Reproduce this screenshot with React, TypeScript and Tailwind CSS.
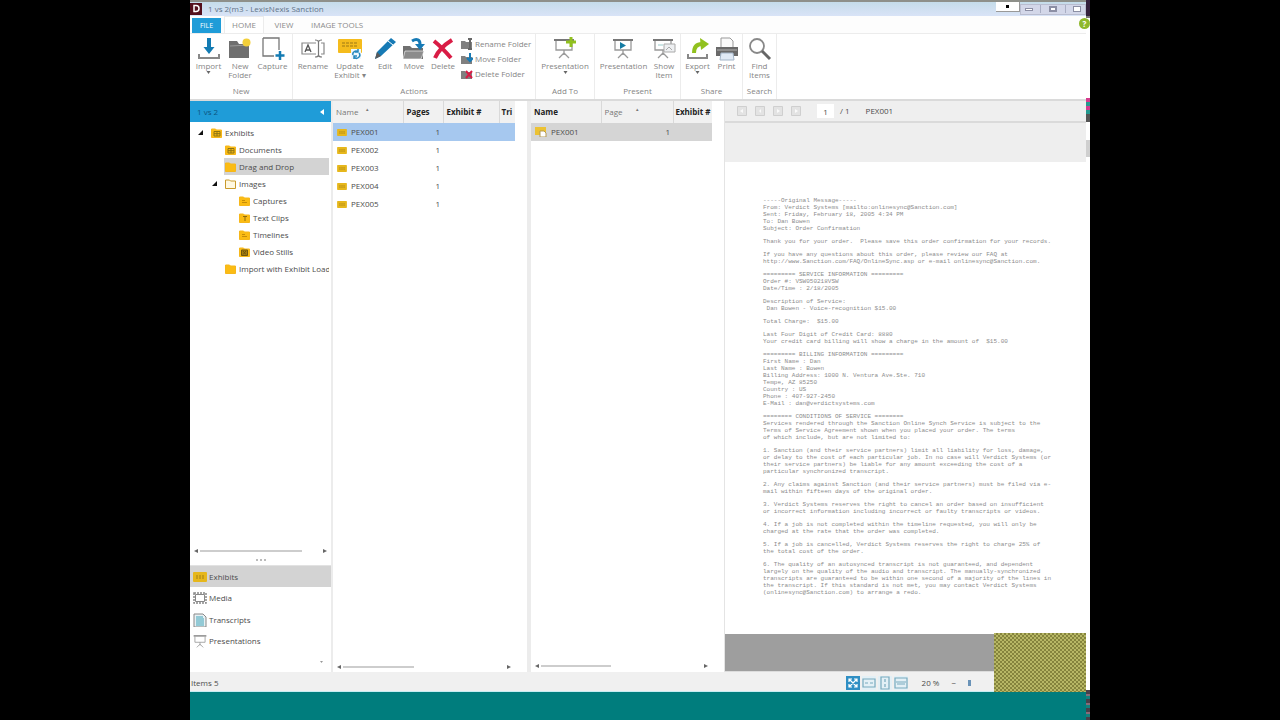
import type { ReactNode } from "react";
import clsx from "clsx";

type FolderKind = "grid" | "plain" | "outline" | "line" | "text" | "film";

type TreeItem = {
    name: string;
    level: number;
    kind: FolderKind;
    open?: boolean;
    selected?: boolean;
};

const tree: TreeItem[] = [
    { name: "Exhibits", level: 0, kind: "grid", open: true },
    { name: "Documents", level: 1, kind: "grid" },
    { name: "Drag and Drop", level: 1, kind: "plain", selected: true },
    { name: "Images", level: 1, kind: "outline", open: true },
    { name: "Captures", level: 2, kind: "line" },
    { name: "Text Clips", level: 2, kind: "text" },
    { name: "Timelines", level: 2, kind: "line" },
    { name: "Video Stills", level: 2, kind: "film" },
    { name: "Import with Exhibit Load", level: 1, kind: "plain" },
];

const exhibits = ["PEX001", "PEX002", "PEX003", "PEX004", "PEX005"];

const letter: string[] = [
    `-----Original Message-----
From: Verdict Systems [mailto:onlinesync@Sanction.com]
Sent: Friday, February 18, 2005 4:34 PM
To: Dan Bowen
Subject: Order Confirmation`,
    `Thank you for your order.  Please save this order confirmation for your records.`,
    `If you have any questions about this order, please review our FAQ at
http://www.Sanction.com/FAQ/OnlineSync.asp or e-mail onlinesync@Sanction.com.`,
    `========= SERVICE INFORMATION =========
Order #: VSW050218VSW
Date/Time : 2/18/2005`,
    `Description of Service:
 Dan Bowen - Voice-recognition $15.00`,
    `Total Charge:  $15.00`,
    `Last Four Digit of Credit Card: 8880
Your credit card billing will show a charge in the amount of  $15.00`,
    `========= BILLING INFORMATION =========
First Name : Dan
Last Name : Bowen
Billing Address: 1000 N. Ventura Ave.Ste. 710
Tempe, AZ 85250
Country : US
Phone : 407-927-2450
E-Mail : dan@verdictsystems.com`,
    `======== CONDITIONS OF SERVICE ========
Services rendered through the Sanction Online Synch Service is subject to the
Terms of Service Agreement shown when you placed your order. The terms
of which include, but are not limited to:`,
    `1. Sanction (and their service partners) limit all liability for loss, damage,
or delay to the cost of each particular job. In no case will Verdict Systems (or
their service partners) be liable for any amount exceeding the cost of a
particular synchronized transcript.`,
    `2. Any claims against Sanction (and their service partners) must be filed via e-
mail within fifteen days of the original order.`,
    `3. Verdict Systems reserves the right to cancel an order based on insufficient
or incorrect information including incorrect or faulty transcripts or videos.`,
    `4. If a job is not completed within the timeline requested, you will only be
charged at the rate that the order was completed.`,
    `5. If a job is cancelled, Verdict Systems reserves the right to charge 25% of
the total cost of the order.`,
    `6. The quality of an autosynced transcript is not guaranteed, and dependent
largely on the quality of the audio and transcript. The manually-synchronized
transcripts are guaranteed to be within one second of a majority of the lines in
the transcript. If this standard is not met, you may contact Verdict Systems
(onlinesync@Sanction.com) to arrange a redo.`,
];

function Folder({ kind }: { kind: FolderKind }) {
    return (
        <svg className="h-[10px] w-[11px] shrink-0" viewBox="0 0 11 10">
            <path
                d="M0.5 1h4l1 1h5v7.500h-10z"
                fill={kind === "outline" ? "#fff8e0" : "#fbbc14"}
                stroke={kind === "outline" ? "#c99a2b" : "#f6b71a"}
            />
            {kind === "grid" && <path d="M3 3.500h6v4.500h-6zM3 5.700h6M6 3.500v4.500" fill="none" stroke="#8d7414" />}
            {kind === "line" && <path d="M3 6.500h5M3 4.500h3" stroke="#c58c0a" />}
            {kind === "text" && <path d="M4 3.500h4M6 3.500v4.500" stroke="#8d6a10" />}
            {kind === "film" && <path d="M2.500 3h6v5.500h-6zM4 4l3 3.500M7 4l-3 3.500" fill="#a57d0f" stroke="#6d5510" />}
        </svg>
    );
}

function ExhibitIcon({ className }: { className: string }) {
    return (
        <svg className={className} viewBox="0 0 14 10">
            <rect width="14" height="10" rx="1" fill="#e6b71c" />
            <path d="M3 4h8M3 6h8" stroke="#a37e12" strokeDasharray="2 1" />
        </svg>
    );
}

const caret = (
    <svg className="h-[5px] w-[5px]" viewBox="0 0 5 5">
        <path d="M0.500 1h4L2.500 4z" fill="#666" />
    </svg>
);

type ToolButtonProps = {
    label: string;
    icon: ReactNode;
    width: string;
    menu?: boolean;
};

function ToolButton({ label, icon, width, menu }: ToolButtonProps) {
    return (
        <button className={clsx("flex shrink-0 flex-col items-center pt-[3px]", width)}>
            <svg className="h-6 w-6" viewBox="0 0 24 24" fill="none">
                {icon}
            </svg>
            <span className="whitespace-pre text-center leading-[9px]">{label}</span>
            {menu && caret}
        </button>
    );
}

function Group({ title, width, children }: { title: string; width: string; children: ReactNode }) {
    return (
        <section className={clsx("flex shrink-0 flex-col border-r border-[#ececec]", width)}>
            <div className="flex flex-1 justify-center">{children}</div>
            <h2 className="pb-[3px] text-center leading-[10px]">{title}</h2>
        </section>
    );
}

function Screen({ children }: { children?: ReactNode }) {
    return (
        <>
            <path d="M1 3h20" stroke="#777" strokeWidth="2" />
            <path d="M3 4v9h16V4M11 13v5M11 16l-5 5M11 16l5 5" stroke="#999" strokeWidth="1.300" />
            {children}
        </>
    );
}

const importIcon = (
    <>
        <path d="M12 1v11" stroke="#137bb3" strokeWidth="4" />
        <path d="M6.500 10h11L12 17z" fill="#137bb3" />
        <path d="M2 17v4h20v-4" stroke="#888" strokeWidth="2" />
    </>
);

const newFolderIcon = (
    <>
        <path d="M1 4h8l2 3h10v14H1z" fill="#6f6f6f" />
        <path d="M2 9l19-1" stroke="#999" />
        <circle cx="18.500" cy="5.500" r="4" fill="#f3cf3a" />
    </>
);

const captureIcon = (
    <>
        <path d="M2 1h16v12M2 1v18h11" stroke="#777" strokeWidth="1.300" />
        <path d="M19 14v9M14.500 18.500h9" stroke="#137bb3" strokeWidth="2.500" />
    </>
);

const renameIcon = (
    <>
        <path d="M15 6H1v11h14M20 6h3v11h-3" stroke="#888" strokeWidth="1.200" />
        <path d="M14 3c2 0 3.500 0 3.500 2v13c0 2-1.500 2-3.500 2M21 3c-2 0-3.500 0-3.500 2v13c0 2 1.500 2 3.500 2" stroke="#777" strokeWidth="1.200" />
        <path d="M4 15l3-7 3 7M5 13h4" stroke="#555" strokeWidth="1.300" />
    </>
);

const updateIcon = (
    <>
        <rect x="0" y="2" width="24" height="14" rx="1" fill="#f5bc1d" />
        <path d="M4 6h16M4 9h16" stroke="#bb8e17" strokeWidth="1.500" strokeDasharray="3 1" />
        <rect x="13" y="12" width="10" height="10" fill="#eef7fc" />
        <path d="M15 18a3 3 0 0 1 5-3M21 16a3 3 0 0 1-5 4M20 12v3h-3M16 22v-3h3" stroke="#2688bd" strokeWidth="1.500" />
    </>
);

const editIcon = (
    <>
        <path d="M2 22l2-7L18 1l5 4L8 19z" fill="#167ab5" />
        <path d="M2 22l2-7 4 4z" fill="#5a5a5a" />
        <path d="M15 4l5 4" stroke="#fff" />
    </>
);

const moveIcon = (
    <>
        <path d="M1 9h7l2 2h11v11H1z" fill="#707070" />
        <path d="M3 14h19l-3 8H1z" fill="#8c8c8c" stroke="#fff" strokeWidth="0.600" />
        <path d="M10 4c5-3 8-1 8 3" stroke="#167ab5" strokeWidth="3" />
        <path d="M13 7h10l-5 6z" fill="#167ab5" />
    </>
);

const deleteIcon = (
    <path d="M3 4c5 4 11 10 17 17M21 3C13 8 7 14 4 21" stroke="#d91c45" strokeWidth="4" />
);

const exportIcon = (
    <>
        <path d="M2 17v4h19v-4" stroke="#888" strokeWidth="2" />
        <path d="M8 16c0-6 3-9 8-9" stroke="#91c11e" strokeWidth="4" />
        <path d="M14 1l9 6-8 6z" fill="#91c11e" />
    </>
);

const printIcon = (
    <>
        <path d="M6 10V1h9l3 3v6" fill="#fafafa" stroke="#999" />
        <path d="M1 10h22v9H1z" fill="#696969" />
        <path d="M2 13h20" stroke="#b5b5b5" />
        <path d="M6 16h12l1 7H5z" fill="#e0eaf6" stroke="#a4b6c9" />
    </>
);

const findIcon = (
    <>
        <circle cx="9" cy="9" r="7" stroke="#888" strokeWidth="1.800" />
        <path d="M14 14l8 8" stroke="#666" strokeWidth="3" />
    </>
);

function SmallTool({ label, color, mark }: { label: string; color: string; mark: string }) {
    return (
        <button className="flex h-[15px] items-center gap-0.5 whitespace-nowrap">
            <svg className="h-3 w-3" viewBox="0 0 12 12" fill="none">
                <path d="M0 3h4l1 1h6v7H0z" fill="#808080" />
                <path d={mark} stroke={color} strokeWidth="2" />
            </svg>
            {label}
        </button>
    );
}

function ScrollBar({ thumb }: { thumb: string }) {
    return (
        <div className="flex h-2 items-center px-1">
            <svg className="h-1 w-1" viewBox="0 0 4 4">
                <path d="M4 0v4L0 2z" fill="#666" />
            </svg>
            <div className="flex flex-1 px-0.5">
                <div className={clsx("h-0.5 bg-[#cdcdcd]", thumb)} />
            </div>
            <svg className="h-1 w-1" viewBox="0 0 4 4">
                <path d="M0 0v4l4-2z" fill="#666" />
            </svg>
        </div>
    );
}

function Ribbon() {
    return (
        <div className="flex h-[66px] border-t border-[#ececec] bg-white text-[8px] text-[#858585]">
            <Group title="New" width="w-[103px]">
                <ToolButton label="Import" width="w-8" icon={importIcon} menu />
                <ToolButton label={"New\nFolder"} width="w-[31px]" icon={newFolderIcon} />
                <ToolButton label="Capture" width="w-[34px]" icon={captureIcon} />
            </Group>
            <Group title="Actions" width="w-[243px]">
                <ToolButton label="Rename" width="w-9" icon={renameIcon} />
                <ToolButton label={"Update\nExhibit ▾"} width="w-[38px]" icon={updateIcon} />
                <ToolButton label="Edit" width="w-8" icon={editIcon} />
                <ToolButton label="Move" width="w-[26px]" icon={moveIcon} />
                <ToolButton label="Delete" width="w-8" icon={deleteIcon} />
                <div className="w-[74px] pt-0.5 pl-0.5">
                    <SmallTool label="Rename Folder" color="#666" mark="M9 1v10M7 1h4M7 11h4" />
                    <SmallTool label="Move Folder" color="#167ab5" mark="M9 0v6M6 5l3 3 3-3" />
                    <SmallTool label="Delete Folder" color="#d91c45" mark="M5 3l6 7M11 3l-6 7" />
                </div>
            </Group>
            <Group title="Add To" width="w-[59px]">
                <ToolButton
                    label="Presentation"
                    width="w-14"
                    menu
                    icon={
                        <Screen>
                            <path d="M18 0v10M13 5h10" stroke="#91c11e" strokeWidth="3" />
                        </Screen>
                    }
                />
            </Group>
            <Group title="Present" width="w-[86px]">
                <ToolButton
                    label="Presentation"
                    width="w-[53px]"
                    icon={
                        <Screen>
                            <path d="M8 5l6 3.500L8 12z" fill="#147ca4" />
                        </Screen>
                    }
                />
                <ToolButton
                    label={"Show\nItem"}
                    width="w-7"
                    icon={
                        <Screen>
                            <path d="M12 7h11v8H12z" fill="#eef0f2" stroke="#aaa" />
                            <path d="M14 13l3-3 3 3" stroke="#aaa" />
                            <path d="M6 8h5" stroke="#9cc" />
                        </Screen>
                    }
                />
            </Group>
            <Group title="Share" width="w-[62px]">
                <ToolButton label="Export" width="w-[30px]" icon={exportIcon} menu />
                <ToolButton label="Print" width="w-7" icon={printIcon} />
            </Group>
            <Group title="Search" width="w-[34px]">
                <ToolButton label={"Find\nItems"} width="w-8" icon={findIcon} />
            </Group>
        </div>
    );
}

function Sidebar() {
    return (
        <aside className="flex w-[143px] shrink-0 flex-col border-r-2 border-[#ececec] bg-white">
            <header className="flex h-[21px] items-center justify-between bg-[#1f9cd8] px-[7px] text-[#0d557f]">
                1 vs 2
                <button aria-label="Collapse">
                    <svg className="h-1.5 w-1" viewBox="0 0 4 6">
                        <path d="M4 0v6L0 3z" fill="#fff" />
                    </svg>
                </button>
            </header>
            <ul className="flex-1 overflow-hidden pt-0.5 pr-0.5">
                {tree.map((item) => (
                    <li
                        key={item.name}
                        className={clsx(
                            "flex h-[17px]",
                            item.level === 0 && "pl-2",
                            item.level === 1 && "pl-[22px]",
                            item.level === 2 && "pl-9"
                        )}
                    >
                        <span className="flex w-3 shrink-0 items-center">
                            {item.open && (
                                <svg className="h-[5px] w-[5px]" viewBox="0 0 5 5">
                                    <path d="M5 0v5H0z" fill="#111" />
                                </svg>
                            )}
                        </span>
                        <button
                            className={clsx(
                                "flex min-w-0 flex-1 items-center gap-[3px] overflow-hidden pl-px whitespace-nowrap",
                                item.selected && "bg-[#d3d3d3]"
                            )}
                        >
                            <Folder kind={item.kind} />
                            {item.name}
                        </button>
                    </li>
                ))}
            </ul>
            <ScrollBar thumb="w-[102px]" />
            <div className="flex h-[11px] items-center justify-center border-b border-[#e2e2e2]">
                <div className="w-[10px] border-t-2 border-dotted border-[#bbb]" />
            </div>
            <nav className="h-[106px]">
                <button className="flex h-[21px] w-full items-center gap-0.5 bg-[#d3d3d3] pl-[3px]">
                    <ExhibitIcon className="h-2.5 w-3.5" />
                    Exhibits
                </button>
                <button className="flex h-[22px] w-full items-center gap-0.5 pl-[3px]">
                    <svg className="h-3.5 w-3.5" viewBox="0 0 14 14" fill="none">
                        <path d="M1 2h12v10H1z" stroke="#888" strokeWidth="1.500" strokeDasharray="2 1" />
                        <path d="M2.500 3.500h9v7h-9z" stroke="#888" />
                    </svg>
                    Media
                </button>
                <button className="flex h-[21px] w-full items-center gap-0.5 pl-[3px]">
                    <svg className="h-3.5 w-3.5" viewBox="0 0 14 14" fill="none">
                        <path d="M1 1h9l3 3v10H1z" fill="#e8f1f4" stroke="#888" />
                        <path d="M3 4h7M3 6h8M3 8h8M3 10h8M3 12h8" stroke="#3fa3b8" />
                    </svg>
                    Transcripts
                </button>
                <button className="flex h-[21px] w-full items-center gap-0.5 pl-[3px]">
                    <svg className="h-3.5 w-3.5" viewBox="0 0 22 22" fill="none">
                        <Screen />
                    </svg>
                    Presentations
                </button>
                <div className="flex justify-end pt-[9px] pr-2">
                    <svg className="h-[3px] w-[3px]" viewBox="0 0 3 3">
                        <path d="M0 1h3L1.500 3z" fill="#999" />
                    </svg>
                </div>
            </nav>
        </aside>
    );
}

const headCell = "h-[22px] overflow-hidden border-r border-[#d9d9d9] px-[3px] text-left whitespace-nowrap";

function ExhibitList() {
    return (
        <section className="flex w-[198px] shrink-0 flex-col border-r-4 border-[#ececec] bg-white">
            <div className="flex-1 pr-3">
                <table className="w-full table-fixed border-collapse">
                    <thead className="bg-[#f1f1f1] text-[#222]">
                        <tr>
                            <th className={clsx(headCell, "w-[70px] font-normal text-[#777]")}>
                                <span className="flex justify-between">
                                    Name
                                    <span className="w-[34px] text-[5px] leading-none">▴</span>
                                </span>
                            </th>
                            <th className={clsx(headCell, "w-10")}>Pages</th>
                            <th className={clsx(headCell, "w-14")}>Exhibit #</th>
                            <th className="h-[22px] pl-0.5 text-left whitespace-nowrap">Tri</th>
                        </tr>
                    </thead>
                    <tbody>
                        {exhibits.map((name, i) => (
                            <tr key={name} className={clsx("h-[18px]", i === 0 && "bg-[#a6c8ef]")}>
                                <td className="pl-1">
                                    <span className="flex items-center gap-1">
                                        <ExhibitIcon className="h-[7px] w-2.5" />
                                        {name}
                                    </span>
                                </td>
                                <td className="pr-[3px] text-right">1</td>
                                <td />
                                <td />
                            </tr>
                        ))}
                    </tbody>
                </table>
            </div>
            <div className="pr-3 pb-[1px]">
                <ScrollBar thumb="w-[71px]" />
            </div>
        </section>
    );
}

function PageList() {
    return (
        <section className="flex w-[194px] shrink-0 flex-col border-r border-[#e4e4e4] bg-white">
            <div className="flex-1 pr-3">
                <table className="w-full table-fixed border-collapse">
                    <thead className="bg-[#f1f1f1] text-[#222]">
                        <tr>
                            <th className={clsx(headCell, "w-[70px]")}>Name</th>
                            <th className={clsx(headCell, "w-[72px] font-normal text-[#777]")}>
                                <span className="flex justify-between">
                                    Page
                                    <span className="w-[34px] text-[5px] leading-none">▴</span>
                                </span>
                            </th>
                            <th className="h-[22px] pl-0.5 text-left whitespace-nowrap">Exhibit #</th>
                        </tr>
                    </thead>
                    <tbody>
                        <tr className="h-[18px] bg-[#d5d5d5]">
                            <td className="pl-1">
                                <span className="flex items-center gap-1">
                                    <svg className="h-2.5 w-3" viewBox="0 0 12 10">
                                        <path d="M0 0h11v8H0z" fill="#ecc233" />
                                        <path d="M5 4h4l2 2v4H5z" fill="#fff" stroke="#b59a55" />
                                    </svg>
                                    PEX001
                                </span>
                            </td>
                            <td className="pr-[3px] text-right">1</td>
                            <td />
                        </tr>
                    </tbody>
                </table>
            </div>
            <div className="pr-3 pb-[2px]">
                <ScrollBar thumb="w-[70px]" />
            </div>
        </section>
    );
}

const pagerMarks = ["M6 3L3 5l3 2z", "M6 3L4 5l2 2z", "M4 3l3 2-3 2z", "M4 3l3 2-3 2z"];

function Viewer() {
    return (
        <main className="flex min-w-0 flex-1 flex-col bg-white">
            <div className="flex h-[22px] items-center border-b-2 border-[#dadada] bg-[#efefef] pl-3">
                <div className="flex gap-2">
                    {pagerMarks.map((mark, i) => (
                        <button key={i} aria-label={["First", "Previous", "Next", "Last"][i]}>
                            <svg className="h-2.5 w-2.5" viewBox="0 0 10 10">
                                <path d="M0.500 0.500h9v9h-9z" fill="#e3e3e3" stroke="#cfcfcf" />
                                <path d={mark} fill="#fafafa" />
                            </svg>
                        </button>
                    ))}
                </div>
                <input
                    aria-label="Page number"
                    className="ml-4 h-3.5 w-[17px] bg-white text-center"
                    defaultValue="1"
                />
                <span className="ml-1.5 whitespace-pre">/ 1</span>
                <span className="ml-4">PEX001</span>
            </div>
            <div className="h-[39px] bg-[#eeeeee]" />
            <article className="flex flex-1 flex-col gap-1.5 overflow-hidden pt-[35px] pl-[38px] font-['Liberation_Mono',monospace] text-[6px] leading-[7px] text-[#8c8c8c]">
                {letter.map((text) => (
                    <p key={text} className="whitespace-pre">
                        {text}
                    </p>
                ))}
            </article>
            <div className="h-[38px] border-b border-[#dcdcdc] bg-[#9e9e9e]" />
        </main>
    );
}

const zoomModes = [
    { name: "Fit page", mark: "M3 3l8 8M11 3l-8 8M3 6V3h3M8 3h3v3M11 8v3H8M6 11H3V8" },
    { name: "Fit width", mark: "M1 3h12v8H1zM3 7h3M8 7h3" },
    { name: "Fit height", mark: "M3 1h8v12H3zM7 3v3M7 8v3" },
    { name: "Actual size", mark: "M1 2h12v10H1zM2 6h10M3 8h8" },
];

function StatusBar() {
    return (
        <footer className="flex h-5 items-center justify-between border-b border-[#c6edf2] bg-[#f0f0f0] pt-0.5 pr-[115px] pl-[1px]">
            <span>Items 5</span>
            <div className="flex items-center">
                {zoomModes.map((mode, i) => (
                    <button
                        key={mode.name}
                        aria-label={mode.name}
                        className={clsx("mr-0.5 h-3.5 w-3.5", i === 0 ? "bg-[#2f8fc4]" : "bg-[#e3f0f6]")}
                    >
                        <svg viewBox="0 0 14 14" fill="none">
                            <path d={mode.mark} stroke={i === 0 ? "#fff" : "#78aabd"} strokeWidth="1.200" />
                        </svg>
                    </button>
                ))}
                <span className="ml-3">20 %</span>
                <button aria-label="Zoom out" className="ml-3">
                    −
                </button>
                <span className="ml-3 h-1.5 w-[3px] bg-[#6a93b8]" />
            </div>
        </footer>
    );
}

function TitleBar() {
    return (
        <header className="flex h-4 items-center gap-1.5 border-t-2 border-[#8e908a] bg-linear-to-b from-[#c5dcea] to-[#d9e3f7] text-[8px] text-[#5f7388]">
            <svg className="h-3 w-3" viewBox="0 0 12 12" fill="none">
                <path d="M0 0h12v12H0z" fill="#54101c" />
                <path d="M4 2.500h2c4 0 4 6 0 6H4z" stroke="#fff" strokeWidth="1.500" />
            </svg>
            <h1>1 vs 2(m3 - LexisNexis Sanction</h1>
            <div className="ml-auto flex h-full">
                <div className="flex h-2.5 w-6 items-center justify-center border-r border-b border-[#999] bg-white">
                    <span className="h-[3px] w-[3px] bg-black" />
                </div>
                <div className="flex h-[11px] w-[66px] items-center justify-around self-center border border-[#b9bdd0] bg-[#d3d7e9]">
                    <button aria-label="Minimize" className="h-[3px] w-2 border border-[#8c8fa5] bg-white" />
                    <span className="h-2 w-px bg-[#a9aec4]" />
                    <button aria-label="Restore" className="h-1.5 w-2 border-2 border-[#8c8fa5] bg-white" />
                    <span className="h-2 w-px bg-[#a9aec4]" />
                    <button aria-label="Close" className="h-1.5 w-2 border border-[#8c8fa5] bg-white" />
                </div>
            </div>
        </header>
    );
}

function Tabs() {
    return (
        <nav className="flex h-[17px] items-end bg-[#fdfdfd] pl-0.5 text-[8px] text-[#8b8b8b]">
            <button className="h-[15px] w-[29px] bg-[#1f9cd8] text-[7px] text-white">FILE</button>
            <button className="ml-[3px] h-[17px] w-10 border-x border-t border-[#ececec] bg-white">HOME</button>
            <button className="h-[17px] w-10">VIEW</button>
            <button className="h-[17px] px-[7px]">IMAGE TOOLS</button>
            <button
                aria-label="Help"
                className="mr-[-4px] mb-1 ml-auto h-[11px] w-[11px] rounded-full bg-[#8fb82b] text-[8px] leading-none font-bold text-white"
            >
                ?
            </button>
        </nav>
    );
}

// Slice of the neighbouring window along the right border
function EdgeStrip() {
    return (
        <div className="flex w-1 shrink-0 flex-col bg-white">
            <div className="h-4 bg-[#33203c]" />
            <div className="h-[82px] border-t-2 border-[#777]" />
            <div className="h-1 bg-[#d43b8d]" />
            <div className="h-1 bg-[#24998f]" />
            <div className="h-1 bg-[#d43b8d]" />
            <div className="h-1 bg-[#24998f]" />
            <div className="h-2 bg-[#555]" />
            <div className="mt-[18px] h-[17px] bg-[#cfcfcf]" />
            <div className="flex-1" />
            <div className="h-[30px] bg-[repeating-linear-gradient(#47404a_0_4px,#8a6a78_4px_6px,#167f7c_6px_9px)]" />
        </div>
    );
}

export default function App() {
    return (
        <div className="min-h-screen bg-black">
            <div className="mx-auto flex min-h-screen w-full max-w-[900px] overflow-hidden font-['Open_Sans','Noto_Sans',sans-serif] text-[8px] leading-[10px] text-[#4c4c4c]">
                <div className="relative flex min-w-0 flex-1 flex-col">
                    <TitleBar />
                    <Tabs />
                    <Ribbon />
                    <div className="flex flex-1 border-t-2 border-[#dadada]">
                        <Sidebar />
                        <ExhibitList />
                        <PageList />
                        <Viewer />
                    </div>
                    <StatusBar />
                    <div className="h-7 bg-[#007d7d]" />
                    <div className="absolute right-0 bottom-7 h-[59px] w-[92px] bg-[#aaa957] bg-[repeating-conic-gradient(#85843d_0_25%,#b7b765_0_50%)] bg-[length:4px_4px]" />
                </div>
                <EdgeStrip />
            </div>
        </div>
    );
}
